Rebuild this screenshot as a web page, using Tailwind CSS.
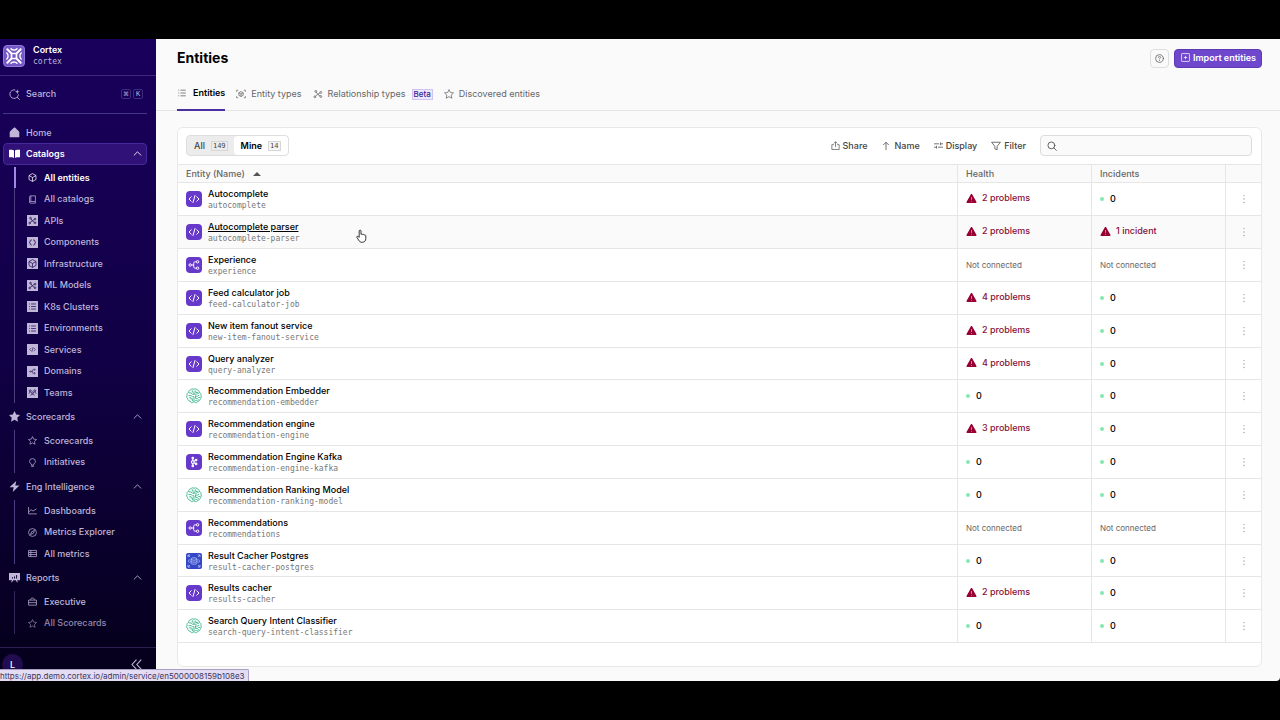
<!DOCTYPE html>
<html lang="en">

<head>
  <meta charset="UTF-8">
  <meta name="viewport" content="width=device-width, initial-scale=1.0">
  <title>Entities - Cortex</title>
  <script src="https://cdn.jsdelivr.net/npm/@tailwindcss/browser@4"></script>
</head>

<body class="bg-black font-['Inter',sans-serif] text-[9px] leading-3 text-black">
  <!-- Icon sprite -->
  <svg class="hidden" aria-hidden="true">
    <symbol id="i-code" viewBox="0 0 16 16" fill="none" stroke="currentColor" stroke-width="1" stroke-linecap="round" stroke-linejoin="round">
      <path d="M5.2 5.8 3 8l2.200 2.200M10.800 5.800 13 8l-2.200 2.200M9 4.500 7 11.500" />
    </symbol>
    <symbol id="i-nodes" viewBox="0 0 16 16" fill="none" stroke="currentColor" stroke-width="1">
      <circle cx="4.2" cy="8" r="1.200" /><circle cx="11.6" cy="4.800" r="1.200" /><circle cx="11.6" cy="11.200" r="1.200" />
      <path d="M5.5 8h2.200M10.400 4.800H9.200c-.9 0-1.500.6-1.500 1.500v3.400c0 .9.6 1.500 1.500 1.500h1.200" />
    </symbol>
    <symbol id="i-kafka" viewBox="0 0 16 16" fill="none" stroke="currentColor" stroke-width="1.1">
      <circle cx="6.8" cy="8" r="1.4" /><circle cx="6.8" cy="4.1" r=".8" /><circle cx="6.8" cy="11.9" r=".8" />
      <circle cx="10.1" cy="6.1" r=".8" /><circle cx="10.1" cy="9.9" r=".8" />
      <path d="M6.8 4.9v1.700M6.8 9.400v1.700M8.100 7.200l1.200-.7M8.100 8.800l1.200.7" />
    </symbol>
    <symbol id="i-brain" viewBox="0 0 16 16" fill="none" stroke="currentColor" stroke-width=".9" stroke-linecap="round" stroke-linejoin="round">
      <path d="M8 1.300c-1-.9-2.700-.7-3.200.6-1.400 0-2.300 1.100-1.900 2.300C1.400 4.500.6 6 1.200 7.200c-.9 1-.7 2.700.5 3.300-.1 1.400.9 2.500 2.200 2.500.5 1.600 2.300 2.200 3.400 1.200l.7-.6" />
      <path d="M8 1.300c1-.9 2.700-.7 3.200.6 1.400 0 2.300 1.100 1.900 2.300 1.500.3 2.300 1.800 1.700 3 .9 1 .7 2.700-.5 3.300.1 1.400-.9 2.500-2.200 2.500-.5 1.600-2.300 2.200-3.400 1.200l-.7-.6" />
      <path d="M8 3.600v2.600H6.400L5 4.900H3.300M6.300 2.600v1.600M2.900 7.600h2.300l1.300 1.100H8v4.500M3.600 9.800h1.600v1.400M6.400 12.800v-1.900M9.700 2.800v1.700h1.700M8 6.200h2.300l1.400-1h1M9.500 8.100h2.200l1.100-.9M9.500 8.100v2.300h1.700l1.200 1.100M9.700 12.400h1.400M12.600 9.400h1.300" />
    </symbol>
    <symbol id="i-db" viewBox="0 0 16 16" fill="none" stroke="currentColor" stroke-width=".8">
      <path d="M2 4.200V2h2.200M11.800 2H14v2.200M14 11.800V14h-2.200M4.200 14H2v-2.200M2.200 2.200l1.800 1.800M13.800 2.200 12 4M13.800 13.800 12 12M2.200 13.800 4 12" />
      <ellipse cx="8" cy="6" rx="3" ry="1.200" /><path d="M5 6v4c0 .7 1.300 1.200 3 1.200s3-.5 3-1.200V6M3.300 6.500C2.500 7.500 2.500 8.600 3.300 9.600M12.700 6.500c.8 1 .8 2.100 0 3.100M5 8c0 .7 1.300 1.200 3 1.200S11 8.700 11 8" />
    </symbol>
    <symbol id="i-cube" viewBox="0 0 16 16" fill="none" stroke="currentColor" stroke-width="1.300" stroke-linejoin="round">
      <path d="m8 1 6.200 3.500v7L8 15l-6.200-3.500v-7zM1.800 4.500 8 8l6.200-3.500M8 8v7" />
    </symbol>
    <symbol id="i-book" viewBox="0 0 16 16" fill="none" stroke="currentColor" stroke-width="1.300" stroke-linejoin="round">
      <path d="M2.800 13V3.200c0-.9.700-1.700 1.700-1.700h8.700v10H4.300c-.9 0-1.500.7-1.500 1.500s.6 1.500 1.500 1.500h8.900v-3M5 1.500v10" />
    </symbol>
    <symbol id="i-graph" viewBox="0 0 16 16" fill="none" stroke="currentColor" stroke-width="1.300">
      <circle cx="4.500" cy="3.800" r="1.500" /><circle cx="12.500" cy="5.500" r="1.500" /><circle cx="12.500" cy="12" r="1.500" /><circle cx="3" cy="12.500" r="1.500" />
      <path d="m5.300 5.100 2.200 3.400M4 11.400l3.500-2.900 3.700-2.200M7.500 8.500l3.700 2.700" />
    </symbol>
    <symbol id="i-braces" viewBox="0 0 16 16" fill="none" stroke="currentColor" stroke-width="1.400" stroke-linecap="round">
      <path d="M6 3.500c-1.500 0-2 .6-2 1.800 0 1.500-.3 2.400-1.600 2.700 1.300.3 1.600 1.200 1.600 2.700 0 1.200.5 1.800 2 1.800M10 3.500c1.500 0 2 .6 2 1.800 0 1.500.3 2.400 1.600 2.700-1.300.3-1.600 1.200-1.600 2.700 0 1.200-.5 1.800-2 1.800" />
    </symbol>
    <symbol id="i-list" viewBox="0 0 16 16" fill="none" stroke="currentColor" stroke-width="1.300">
      <path d="M5.500 3.500H14M5.500 8H14M5.500 12.500H14M2 3.500h1.500M2 8h1.500M2 12.500h1.500" />
    </symbol>
    <symbol id="i-team" viewBox="0 0 16 16" fill="none" stroke="currentColor" stroke-width="1.300">
      <circle cx="4" cy="5" r="1.700" /><circle cx="12" cy="5" r="1.700" /><circle cx="8" cy="8.500" r="1.700" />
      <path d="M1.500 10c.3-1.500 1.300-2.200 2.700-2.200M14.500 10c-.3-1.500-1.300-2.200-2.700-2.200M4.800 13.500c.4-1.800 1.600-2.600 3.200-2.600s2.800.8 3.200 2.600" />
    </symbol>
    <symbol id="i-star" viewBox="0 0 16 16" fill="none" stroke="currentColor" stroke-width="1.200" stroke-linejoin="round">
      <path d="m8 1 2.100 4.600 5.100.6-3.700 3.500 1 5L8 12.200l-4.500 2.500 1-5L.8 6.200l5.100-.6z" />
    </symbol>
    <symbol id="i-bulb" viewBox="0 0 16 16" fill="none" stroke="currentColor" stroke-width="1.300" stroke-linecap="round">
      <path d="M6 12.200v-1.700C4 9.700 2.800 8.200 2.800 6.200a5.200 5.200 0 0 1 10.400 0c0 2-1.200 3.500-3.200 4.300v1.700zM6.500 15h3" />
    </symbol>
    <symbol id="i-chart" viewBox="0 0 16 16" fill="none" stroke="currentColor" stroke-width="1.300" stroke-linecap="round" stroke-linejoin="round">
      <path d="M1 2.500v11.500h14M1.500 10.500l4-4 3.500 2.500 5.500-3.500" />
    </symbol>
    <symbol id="i-compass" viewBox="0 0 16 16" fill="none" stroke="currentColor" stroke-width="1.300" stroke-linejoin="round">
      <circle cx="8" cy="8" r="7" /><path d="m11.500 4.500-2 5-5 2 2-5z" />
    </symbol>
    <symbol id="i-table" viewBox="0 0 16 16" fill="none" stroke="currentColor" stroke-width="1.300">
      <path d="M1 2.500h14v11H1zM1 6.200h14M1 9.800h14M5 2.500v11" />
    </symbol>
    <symbol id="i-case" viewBox="0 0 16 16" fill="none" stroke="currentColor" stroke-width="1.300" stroke-linejoin="round">
      <path d="M1 5.500h14v9H1zM4.500 5.500C4.500 3 6 1.800 8 1.800s3.500 1.200 3.500 3.700M1 10h14" />
    </symbol>
    <symbol id="i-up" viewBox="0 0 16 16" fill="none" stroke="currentColor" stroke-width="1.500" stroke-linecap="round" stroke-linejoin="round">
      <path d="m2 11 6-6 6 6" />
    </symbol>
    <symbol id="i-search" viewBox="0 0 16 16" fill="none" stroke="currentColor" stroke-width="1.300" stroke-linecap="round">
      <circle cx="7" cy="7" r="5.500" /><path d="m11 11 4 4" />
    </symbol>
    <symbol id="i-warn" viewBox="0 0 16 16">
      <path fill="#960032" d="M8 1.300c.5 0 .9.200 1.100.7l6 10.800c.4.900-.1 1.900-1.100 1.900H2c-1 0-1.500-1-1.100-1.900L6.900 2c.2-.5.600-.7 1.100-.7z" />
      <path stroke="#e08aa4" stroke-width="1.300" stroke-linecap="round" d="M8 6.500v3M8 12v.1" />
    </symbol>
    <symbol id="i-dots" viewBox="0 0 16 16" fill="currentColor">
      <circle cx="8" cy="2.500" r="1.100" /><circle cx="8" cy="8" r="1.100" /><circle cx="8" cy="13.500" r="1.100" />
    </symbol>
  </svg>

  <div class="relative my-[39px] flex min-h-[642px] overflow-hidden rounded-br-sm bg-[#fafafa]">
    <!-- Sidebar -->
    <aside class="flex w-[156px] shrink-0 flex-col bg-linear-to-b from-[#19005c] via-[#110045] to-[#05001a] font-medium text-[#bfb6d8]">
      <div class="flex h-[37px] items-center gap-2 border-b border-[#3d2a7d] pr-[3px] pb-[2px] pl-[3px]">
        <svg class="size-[22px]" viewBox="0 0 22 22" fill="none" stroke="#fff" stroke-linecap="round">
          <rect x=".5" y=".5" width="21" height="21" rx="3.500" fill="#7558c6" stroke="#8f78dc" />
          <rect x="8.500" y="8.500" width="5" height="5" rx="1" stroke-width="1.700" />
          <path stroke-width="2" d="M8.300 8.300 4.300 4.300M13.700 8.300l4-4M8.300 13.700l-4 4M13.700 13.700l4 4" />
          <path stroke-width="1.400" d="M8 3.800c1.500 1.700 4.500 1.700 6 0M8 18.200c1.500-1.700 4.500-1.700 6 0M3.800 8c1.700 1.500 1.700 4.500 0 6M18.200 8c-1.700 1.500-1.700 4.500 0 6" />
        </svg>
        <div>
          <p class="font-semibold text-white">Cortex</p>
          <p class="font-['DejaVu_Sans_Mono',monospace] text-[8px] font-normal">cortex</p>
        </div>
      </div>

      <button type="button" class="mr-[9px] ml-[3px] flex h-[38px] items-center border-b border-[#46368a] pb-px pl-[6px] text-left">
        <svg class="mr-[6px] size-[11px]" viewBox="0 0 16 16" fill="none" stroke="currentColor" stroke-width="1.300" stroke-linecap="round">
          <path d="M8.500 1.200a6.300 6.300 0 1 0 5.300 7.300M12 12l3.200 3.200" /><path fill="currentColor" stroke="none" d="m12 .5.900 2.600 2.600.9-2.600.9L12 7.500l-.9-2.600L8.500 4l2.600-.9z" />
        </svg>
        <span class="grow">Search</span>
        <kbd class="mr-[2px] grid size-[10px] place-items-center rounded-xs border border-[#3d2d80] font-['DejaVu_Sans',sans-serif] text-[6px] leading-none">⌘</kbd>
        <kbd class="mr-1 grid size-[10px] place-items-center rounded-xs border border-[#3d2d80] font-['DejaVu_Sans_Mono',monospace] text-[7px] leading-none">K</kbd>
      </button>

      <nav class="mr-[9px] grow pt-2 pl-[3px]">
        <a href="#" class="flex h-[21px] items-center pl-[6px]">
          <svg class="mr-[6px] size-[11px]" viewBox="0 0 16 16" fill="currentColor"><path d="M8 .8c.4 0 .7.100 1 .4l5.300 4.800c.4.300.7.800.7 1.300V15H1V7.300c0-.5.200-1 .7-1.300L7 1.200c.3-.3.600-.4 1-.4z" /></svg>Home
        </a>
        <button type="button" class="flex h-[22px] w-full items-center rounded-sm border border-[#45289a] bg-[#2f1178] pr-1 pb-px pl-[5px] text-left font-semibold text-white">
          <svg class="mr-[6px] size-[11px]" viewBox="0 0 16 16" fill="currentColor"><path d="M0 2.500c3 0 5.500 0 7.300 1.200v11C5.500 13.500 3 13.500 0 13.500zM16 2.500c-3 0-5.500 0-7.300 1.200v11c1.800-1.200 4.300-1.200 7.300-1.200z" /></svg>
          <span class="grow">Catalogs</span><svg class="size-[9px]"><use href="#i-up" /></svg>
        </button>
        <ul class="mt-[2px] ml-[11px] border-l border-[#4a3d80]" data-menu="catalogs"></ul>

        <button type="button" class="flex h-[27px] w-full items-center pr-[5px] pl-[6px] text-left">
          <svg class="mr-[6px] size-[11px]" viewBox="0 0 16 16" fill="currentColor"><path d="m8 0 2.500 5.200 5.500.7-4 3.900 1 5.700-5-2.700-5 2.700 1-5.700-4-3.900 5.500-.7z" /></svg>
          <span class="grow">Scorecards</span><svg class="size-[9px]"><use href="#i-up" /></svg>
        </button>
        <ul class="ml-[11px] border-l border-[#4a3d80]" data-menu="scorecards"></ul>

        <button type="button" class="flex h-[27px] w-full items-center pr-[5px] pl-[6px] text-left">
          <svg class="mr-[6px] size-[11px]" viewBox="0 0 16 16" fill="currentColor"><path d="M10.500 0 .8 9h6L5.500 16l9.700-9.500H9.200z" /></svg>
          <span class="grow">Eng Intelligence</span><svg class="size-[9px]"><use href="#i-up" /></svg>
        </button>
        <ul class="ml-[11px] border-l border-[#4a3d80]" data-menu="intelligence"></ul>

        <button type="button" class="flex h-[27px] w-full items-center pr-[5px] pl-[6px] text-left">
          <svg class="mr-[6px] size-[11px]" viewBox="0 0 16 16" fill="currentColor"><path d="M0 1.500h16v10.500h-4.500l1.500 3h-1.500L9.800 12H6.200l-1.700 3H3l1.500-3H0z" /><path stroke="#0d0030" stroke-width="1.400" d="M5 9.500v-2M8 9.500v-3M11 9.500v-5" /></svg>
          <span class="grow">Reports</span><svg class="size-[9px]"><use href="#i-up" /></svg>
        </button>
        <ul class="ml-[11px] border-l border-[#332859]" data-menu="reports"></ul>
      </nav>

      <div class="flex h-[34px] items-center justify-between border-t border-[#2b1f50] pr-[14px] pl-[2px]">
        <span class="grid size-[21px] place-items-center rounded-full bg-[#220c50] text-white">L</span>
        <button type="button" aria-label="Collapse sidebar">
          <svg class="size-[11px]" viewBox="0 0 16 16" fill="none" stroke="currentColor" stroke-width="1.600"><path d="M8 1 1.500 8 8 15M15 1 8.500 8l6.500 7" /></svg>
        </button>
      </div>
    </aside>

    <!-- Main -->
    <main class="flex min-w-0 grow flex-col">
      <header class="border-b border-[#e4e4e4] pr-[18px] pl-[21px]">
        <div class="flex h-[38px] items-center">
          <h1 class="grow text-[14px] leading-4 font-bold">Entities</h1>
          <button type="button" aria-label="Help" class="mr-[5px] grid size-[19px] place-items-center rounded-sm border border-[#dedede] text-[#555]">
            <svg class="size-[9px]" viewBox="0 0 16 16" fill="none" stroke="currentColor" stroke-width="1.300" stroke-linecap="round"><circle cx="8" cy="8" r="7" /><path d="M6 6.200c0-1.200.8-2 2-2s2 .8 2 1.800c0 1.400-2 1.500-2 3M8 11.500v.1" /></svg>
          </button>
          <button type="button" class="flex h-[19px] items-center gap-[3px] rounded-sm border border-[#5d39b5] bg-[#6f47cc] pr-[5px] pb-px pl-[6px] font-semibold text-white">
            <svg class="size-[9px]" viewBox="0 0 16 16" fill="none" stroke="currentColor" stroke-width="1.300"><rect x="1" y="1" width="14" height="14" rx="1" /><path d="M8 5v6M5 8h6" /></svg>
            Import entities
          </button>
        </div>
        <nav class="-mb-px flex h-[34px] gap-[11px] text-[#666]">
          <a href="#" class="flex items-center border-b-2 border-[#4b2fa3] font-semibold text-black">
            <svg class="mr-[6px] size-[10px] text-[#666]"><use href="#i-list" /></svg>Entities
          </a>
          <a href="#" class="flex items-center">
            <svg class="mr-[5px] size-[10px]" viewBox="0 0 16 16" fill="none" stroke="currentColor" stroke-width="1.200"><path d="M1 4.500V2h2.500M12.500 2H15v2.500M15 11.500V14h-2.500M3.500 14H1v-2.500M8 4l3.500 2v4L8 12l-3.500-2V6zM4.500 6 8 8l3.500-2M8 8v4" /></svg>Entity types
          </a>
          <a href="#" class="flex items-center">
            <svg class="mr-[5px] size-[10px]"><use href="#i-graph" /></svg>Relationship types
            <span class="ml-[6px] border border-[#cfc4f0] bg-[#ece8fb] px-px text-[8px] leading-[9px] font-medium text-[#3a1f94]">Beta</span>
          </a>
          <a href="#" class="flex items-center">
            <svg class="mr-[5px] size-[10px]"><use href="#i-star" /></svg>Discovered entities
          </a>
        </nav>
      </header>

      <section class="mt-4 mr-[18px] mb-[14px] ml-[21px] grow rounded-md border border-[#e8e8e8] bg-white">
        <div class="flex h-9 items-center pr-[9px] pb-px pl-2 text-[#444]">
          <div class="flex h-[21px] rounded-sm border border-[#dedede] bg-[#ececec] font-medium">
            <button type="button" class="flex items-center gap-[6px] pr-[6px] pl-[7px]">All <span class="border border-[#d6d6d6] px-px font-['DejaVu_Sans_Mono',monospace] text-[7px] leading-[8px]">149</span></button>
            <button type="button" class="flex items-center gap-[6px] rounded-sm bg-white px-[7px] font-semibold text-black">Mine <span class="border border-[#d6d6d6] bg-[#f5f5f5] px-px font-['DejaVu_Sans_Mono',monospace] text-[7px] leading-[8px] font-normal text-[#444]">14</span></button>
          </div>
          <div class="ml-auto flex items-center gap-[14px] pr-[14px] font-medium">
            <button type="button" class="flex items-center gap-[3px]"><svg class="size-[9px]" viewBox="0 0 16 16" fill="none" stroke="currentColor" stroke-width="1.200"><path d="M5 6.500H1.500v8.500h13V6.500H11M8 10.500v-9M5 4.300l3-3 3 3" /></svg>Share</button>
            <button type="button" class="flex items-center gap-[3px]"><svg class="size-[10px]" viewBox="0 0 16 16" fill="none" stroke="currentColor" stroke-width="1.200"><path d="M8 14.500V2M3.500 6.500 8 2l4.500 4.500" /></svg>Name</button>
            <button type="button" class="flex items-center gap-[3px]"><svg class="size-[9px]" viewBox="0 0 16 16" fill="none" stroke="currentColor" stroke-width="1.300"><path d="M0 5h9M11.500 2.500v5M11.500 5H16M0 11h4.500M4.500 8.500v5M7 11h9" /></svg>Display</button>
            <button type="button" class="flex items-center gap-[3px]"><svg class="size-[10px]" viewBox="0 0 16 16" fill="none" stroke="currentColor" stroke-width="1.200" stroke-linejoin="round"><path d="M1 2h14L9.800 8.500V14l-3.600-1.500v-4z" /></svg>Filter</button>
          </div>
          <label class="flex h-[21px] w-[212px] items-center rounded-sm border border-[#dcdcdc] bg-[#fafafa] pl-[6px]">
            <svg class="size-[10px]"><use href="#i-search" /></svg>
            <input type="search" aria-label="Search entities" class="min-w-0 grow px-1 outline-none">
          </label>
        </div>

        <table class="w-full table-fixed border-separate border-spacing-0 text-left">
          <thead class="bg-[#fafafa] text-[#666]">
            <tr class="h-[19px] *:border-y *:border-[#e6e6e6] *:font-medium">
              <th class="border-r pl-2">Entity (Name) <span class="ml-[6px] inline-block h-0 w-0 border-x-4 border-b-4 border-x-transparent border-b-[#555] align-middle"></span></th>
              <th class="w-[134px] border-r pl-2">Health</th>
              <th class="w-[134px] border-r pl-2">Incidents</th>
              <th class="w-[35px]"></th>
            </tr>
          </thead>
          <tbody id="entities"></tbody>
        </table>
      </section>
    </main>

    <div class="absolute bottom-0 left-0 h-3 w-[249px] truncate rounded-tr-xs border-t border-r border-[#a89fc4] bg-[#e3dcf2] text-[8px] leading-[12px] text-[#3f355c]">https://app.demo.cortex.io/admin/service/en5000008159b108e3</div>

    <!-- Mouse pointer -->
    <svg class="absolute top-[190px] left-[356px] h-[14px] w-[11px]" viewBox="0 0 11 14" fill="#fff" stroke="#222" stroke-width=".9" stroke-linejoin="round">
      <path d="M3.200 8.300V2c0-1.300 1.800-1.300 1.800 0v3.500c.3-.6 1.500-.6 1.700.2.400-.5 1.500-.4 1.600.4.600-.4 1.500 0 1.500.8v2.600c0 2.300-1.300 3.800-3.600 3.800-2 0-2.900-.9-3.700-2.400L.8 8.300c-.4-.9.700-1.400 1.300-.7z" />
    </svg>
  </div>

  <script>
    const menus = {
      catalogs: [
        ['All entities', 'cube', 'active'], ['All catalogs', 'book'], ['APIs', 'graph', 'tile'], ['Components', 'braces', 'tile'],
        ['Infrastructure', 'cube', 'tile'], ['ML Models', 'graph', 'tile'], ['K8s Clusters', 'list', 'tile'], ['Environments', 'list', 'tile'],
        ['Services', 'code', 'tile'], ['Domains', 'nodes', 'tile'], ['Teams', 'team', 'tile']
      ],
      scorecards: [['Scorecards', 'star'], ['Initiatives', 'bulb']],
      intelligence: [['Dashboards', 'chart'], ['Metrics Explorer', 'compass'], ['All metrics', 'table']],
      reports: [['Executive', 'case'], ['All Scorecards', 'star', 'faded']]
    };

    // name, icon, health problems, incidents (null = not connected)
    const entities = [
      ['Autocomplete', 'code', 2, 0],
      ['Autocomplete parser', 'code', 2, 1],
      ['Experience', 'nodes', null, null],
      ['Feed calculator job', 'code', 4, 0],
      ['New item fanout service', 'code', 2, 0],
      ['Query analyzer', 'code', 4, 0],
      ['Recommendation Embedder', 'brain', 0, 0],
      ['Recommendation engine', 'code', 3, 0],
      ['Recommendation Engine Kafka', 'kafka', 0, 0],
      ['Recommendation Ranking Model', 'brain', 0, 0],
      ['Recommendations', 'nodes', null, null],
      ['Result Cacher Postgres', 'db', 0, 0],
      ['Results cacher', 'code', 2, 0],
      ['Search Query Intent Classifier', 'brain', 0, 0]
    ];

    const iconStyles = {
      brain: 'text-[#3bb58a]',
      db: 'rounded-xs bg-[#3447c4] text-[#b9c6ff]'
    };

    const linkStyles = {
      active: '-ml-px border-l-2 border-[#9d8ae6] pl-[11px] font-semibold text-white',
      faded: 'pl-[12px] opacity-75'
    };

    document.querySelectorAll('[data-menu]').forEach(function (list) {
      list.innerHTML = menus[list.dataset.menu].map(function ([label, icon, kind]) {
        const iconStyle = kind === 'tile' ? 'bg-[#bfb6d8] p-px text-[#1c0a52]' : 'p-px';
        return `<li class="h-[21px] even:h-[22px]">
          <a href="#" class="flex h-full items-center ${linkStyles[kind] || 'pl-[12px]'}">
            <svg class="mr-[6px] size-[11px] ${iconStyle}"><use href="#i-${icon}" /></svg>${label}
          </a>
        </li>`;
      }).join('');
    });

    function statusCell(count, word) {
      if (count === null) return '<span class="text-[8px] text-[#666]">Not connected</span>';
      if (count === 0) return '<span class="flex items-center gap-[6px] font-medium"><i class="size-1 rounded-full bg-[#86e8b0]"></i>0</span>';
      return `<span class="flex items-center gap-[5px] pb-[2px] font-medium text-[#85103a]"><svg class="size-[11px]"><use href="#i-warn" /></svg>${count} ${word}</span>`;
    }

    document.getElementById('entities').innerHTML = entities.map(function ([name, icon, problems, incidents]) {
      const hovered = name === 'Autocomplete parser';
      return `<tr class="h-[33px] nth-[6n]:h-8 *:border-b *:border-[#e6e6e6] ${hovered ? 'bg-[#fafafa]' : ''}">
        <td class="border-r pl-2">
          <div class="flex items-center gap-[6px]">
            <svg class="size-4 ${iconStyles[icon] || 'rounded-sm bg-[#6639cb] text-white'}"><use href="#i-${icon}" /></svg>
            <div class="pt-[2px]">
              <a href="#" class="block font-medium ${hovered ? 'underline' : ''}">${name}</a>
              <p class="font-['DejaVu_Sans_Mono',monospace] text-[8px] text-[#777]">${name.toLowerCase().replaceAll(' ', '-')}</p>
            </div>
          </div>
        </td>
        <td class="border-r pl-2">${statusCell(problems, 'problems')}</td>
        <td class="border-r pl-2">${statusCell(incidents, 'incident')}</td>
        <td><button type="button" aria-label="Actions" class="mx-auto block text-[#999]"><svg class="size-[10px]"><use href="#i-dots" /></svg></button></td>
      </tr>`;
    }).join('');
  </script>
</body>

</html>
